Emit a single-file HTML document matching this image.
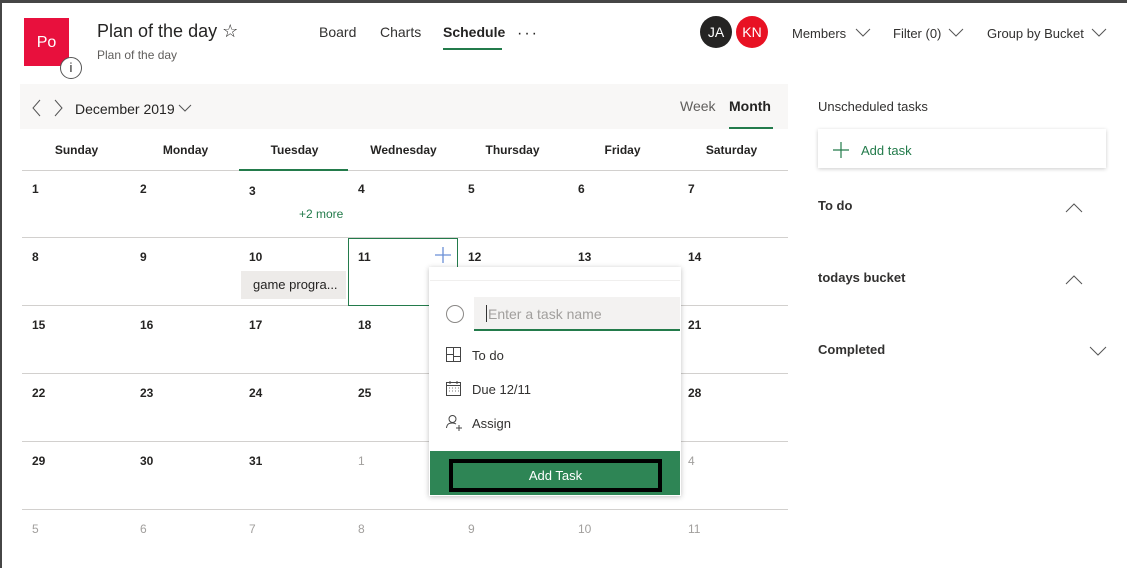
<!DOCTYPE html>
<html><head><meta charset="utf-8"><style>
*{margin:0;padding:0;box-sizing:border-box}
body{width:1127px;height:568px;overflow:hidden;background:#fff;font-family:"Liberation Sans",sans-serif;color:#252423;position:relative}
.a{position:absolute;white-space:nowrap}
.n{position:absolute;font-size:12px;font-weight:bold;color:#252423}
.g{color:#a19f9d;font-weight:normal}
.hl{position:absolute;left:22px;width:766px;height:1px;background:#d2d0ce}
.dh{position:absolute;top:143px;font-size:12px;font-weight:bold;width:109px;text-align:center}
</style></head><body>
<div class="a" style="left:0;top:0;width:1127px;height:3px;background:#464646"></div>
<div class="a" style="left:0;top:0;width:2px;height:568px;background:#464646"></div>

<div class="a" style="left:24px;top:18px;width:45px;height:48px;background:#e8103d;color:#fff;font-size:16px;text-align:center;line-height:50px">Po</div>
<div class="a" style="left:60px;top:57px;width:22px;height:22px;border-radius:50%;border:1px solid #555;background:#fff;font-size:13px;text-align:center;line-height:20px">i</div>
<div class="a" style="left:97px;top:21px;font-size:18px;color:#252423">Plan of the day <span style="font-size:18px">☆</span></div>
<div class="a" style="left:97px;top:48px;font-size:12px;color:#605e5c">Plan of the day</div>
<div class="a" style="left:319px;top:24px;font-size:14px;color:#323130">Board</div>
<div class="a" style="left:380px;top:24px;font-size:14px;color:#323130">Charts</div>
<div class="a" style="left:443px;top:24px;font-size:14px;font-weight:bold">Schedule</div>
<div class="a" style="left:443px;top:48px;width:59px;height:2px;background:#237b4b"></div>
<div class="a" style="left:517px;top:25px;font-size:16px;letter-spacing:2px">···</div>

<div class="a" style="left:700px;top:16px;width:32px;height:32px;border-radius:50%;background:#252423;color:#fff;font-size:14px;text-align:center;line-height:32px">JA</div>
<div class="a" style="left:736px;top:16px;width:32px;height:32px;border-radius:50%;background:#e81123;color:#fff;font-size:14px;text-align:center;line-height:32px">KN</div>
<div class="a" style="left:792px;top:26px;font-size:13px;color:#323130">Members</div>
<svg class="a" style="left:855px;top:28px" width="16" height="10"><path d="M1 1L8 8L15 1" stroke="#555" fill="none"/></svg>
<div class="a" style="left:893px;top:26px;font-size:13px;color:#323130">Filter (0)</div>
<svg class="a" style="left:948px;top:28px" width="16" height="10"><path d="M1 1L8 8L15 1" stroke="#555" fill="none"/></svg>
<div class="a" style="left:987px;top:26px;font-size:13px;color:#323130">Group by Bucket</div>
<svg class="a" style="left:1091px;top:28px" width="16" height="10"><path d="M1 1L8 8L15 1" stroke="#555" fill="none"/></svg>

<div class="a" style="left:20px;top:84px;width:768px;height:45px;background:#f8f7f6"></div>
<svg class="a" style="left:30px;top:99px" width="40" height="18"><path d="M10 1L3 9L10 17" stroke="#555" fill="none"/><path d="M25 1L32 9L25 17" stroke="#555" fill="none"/></svg>
<div class="a" style="left:75px;top:101px;font-size:14px">December 2019</div>
<svg class="a" style="left:178px;top:104px" width="14" height="8"><path d="M1 1L7 7L13 1" stroke="#555" fill="none"/></svg>
<div class="a" style="left:680px;top:98px;font-size:14px;color:#605e5c">Week</div>
<div class="a" style="left:729px;top:98px;font-size:14px;font-weight:bold">Month</div>
<div class="a" style="left:729px;top:127px;width:44px;height:2px;background:#237b4b"></div>

<div class="dh" style="left:22px">Sunday</div><div class="dh" style="left:131px">Monday</div><div class="dh" style="left:240px">Tuesday</div><div class="dh" style="left:349px">Wednesday</div><div class="dh" style="left:458px">Thursday</div><div class="dh" style="left:568px">Friday</div><div class="dh" style="left:677px">Saturday</div>
<div class="hl" style="top:170px"></div>
<div class="a" style="left:239px;top:169px;width:109px;height:2px;background:#237b4b"></div>
<div class="hl" style="top:237px"></div><div class="hl" style="top:305px"></div><div class="hl" style="top:373px"></div><div class="hl" style="top:441px"></div><div class="hl" style="top:509px"></div>

<div class="n" style="left:32px;top:182px">1</div><div class="n" style="left:140px;top:182px">2</div><div class="n" style="left:249px;top:184px">3</div><div class="n" style="left:358px;top:182px">4</div><div class="n" style="left:468px;top:182px">5</div><div class="n" style="left:578px;top:182px">6</div><div class="n" style="left:688px;top:182px">7</div>
<div class="a" style="left:299px;top:207px;font-size:12px;color:#237b4b">+2 more</div>

<div class="n" style="left:32px;top:250px">8</div><div class="n" style="left:140px;top:250px">9</div><div class="n" style="left:249px;top:250px">10</div><div class="n" style="left:358px;top:250px">11</div><div class="n" style="left:468px;top:250px">12</div><div class="n" style="left:578px;top:250px">13</div><div class="n" style="left:688px;top:250px">14</div>
<div class="a" style="left:241px;top:271px;width:105px;height:28px;background:#edebe9;font-size:13px;padding:6px 0 0 12px">game progra...</div>
<div class="a" style="left:348px;top:238px;width:110px;height:68px;border:1px solid #237b4b"></div>
<svg class="a" style="left:434px;top:246px" width="18" height="18"><path d="M9 1V17M1 9H17" stroke="#6b8fd6" stroke-width="1.3"/></svg>

<div class="n" style="left:32px;top:318px">15</div><div class="n" style="left:140px;top:318px">16</div><div class="n" style="left:249px;top:318px">17</div><div class="n" style="left:358px;top:318px">18</div><div class="n" style="left:688px;top:318px">21</div>
<div class="n" style="left:32px;top:386px">22</div><div class="n" style="left:140px;top:386px">23</div><div class="n" style="left:249px;top:386px">24</div><div class="n" style="left:358px;top:386px">25</div><div class="n" style="left:688px;top:386px">28</div>
<div class="n" style="left:32px;top:454px">29</div><div class="n" style="left:140px;top:454px">30</div><div class="n" style="left:249px;top:454px">31</div><div class="n g" style="left:358px;top:454px">1</div><div class="n g" style="left:688px;top:454px">4</div>
<div class="n g" style="left:32px;top:522px">5</div><div class="n g" style="left:140px;top:522px">6</div><div class="n g" style="left:249px;top:522px">7</div><div class="n g" style="left:358px;top:522px">8</div><div class="n g" style="left:468px;top:522px">9</div><div class="n g" style="left:578px;top:522px">10</div><div class="n g" style="left:688px;top:522px">11</div>

<div class="a" style="left:429px;top:267px;width:252px;height:229px;background:#fff;box-shadow:0 1px 5px rgba(0,0,0,.25)"></div>
<div class="a" style="left:430px;top:280px;width:250px;height:1px;background:#f0efee"></div>
<div class="a" style="left:446px;top:305px;width:18px;height:18px;border-radius:50%;border:1px solid #8a8886"></div>
<div class="a" style="left:474px;top:297px;width:206px;height:34px;background:#f3f2f1;border-bottom:2px solid #237b4b"></div>
<div class="a" style="left:486px;top:305px;width:1px;height:17px;background:#333"></div>
<div class="a" style="left:488px;top:306px;font-size:14px;color:#a19f9d">Enter a task name</div>
<svg class="a" style="left:446px;top:347px" width="15" height="15"><path d="M0.5 0.5H14.5V14.5H0.5ZM0.5 7.5H7.5M7.5 0.5V14.5M7.5 9.5H14.5" stroke="#444" fill="none"/></svg>
<div class="a" style="left:472px;top:348px;font-size:13px;color:#323130">To do</div>
<svg class="a" style="left:446px;top:381px" width="15" height="15"><path d="M0.5 1.5H14.5V14.5H0.5ZM0.5 4.5H14.5M4 0V3M11 0V3" stroke="#444" fill="none"/><path d="M3 7h1M6 7h1M9 7h1M12 7h1M3 10h1M6 10h1M9 10h1M12 10h1" stroke="#777"/></svg>
<div class="a" style="left:472px;top:382px;font-size:13px;color:#323130">Due 12/11</div>
<svg class="a" style="left:446px;top:414px" width="16" height="18"><circle cx="6.5" cy="5" r="3.5" stroke="#444" fill="none"/><path d="M0.5 14C1 10 3 9 6.5 9C8 9 9 9.3 10 10M10 14H16M13 11V17" stroke="#444" fill="none"/></svg>
<div class="a" style="left:472px;top:416px;font-size:13px;color:#323130">Assign</div>
<div class="a" style="left:430px;top:451px;width:250px;height:44px;background:#2e8555"></div>
<div class="a" style="left:449px;top:459px;width:213px;height:33px;border:4px solid #000;background:#2e8555;color:#fff;font-size:13px;text-align:center;line-height:25px">Add Task</div>

<div class="a" style="left:818px;top:99px;font-size:13px;color:#323130">Unscheduled tasks</div>
<div class="a" style="left:818px;top:129px;width:288px;height:39px;background:#fff;box-shadow:0 1px 4px rgba(0,0,0,.2)"></div>
<svg class="a" style="left:833px;top:142px" width="16" height="16"><path d="M8 0V16M0 8H16" stroke="#237b4b" stroke-width="1.2"/></svg>
<div class="a" style="left:861px;top:143px;font-size:13px;color:#237b4b">Add task</div>
<div class="a" style="left:818px;top:198px;font-size:13px;font-weight:bold;color:#323130">To do</div>
<svg class="a" style="left:1065px;top:203px" width="18" height="10"><path d="M1 9L9 1L17 9" stroke="#555" fill="none"/></svg>
<div class="a" style="left:818px;top:270px;font-size:13px;font-weight:bold;color:#323130">todays bucket</div>
<svg class="a" style="left:1065px;top:275px" width="18" height="10"><path d="M1 9L9 1L17 9" stroke="#555" fill="none"/></svg>
<div class="a" style="left:818px;top:342px;font-size:13px;font-weight:bold;color:#323130">Completed</div>
<svg class="a" style="left:1089px;top:346px" width="18" height="10"><path d="M1 1L9 9L17 1" stroke="#555" fill="none"/></svg>
</body></html>
